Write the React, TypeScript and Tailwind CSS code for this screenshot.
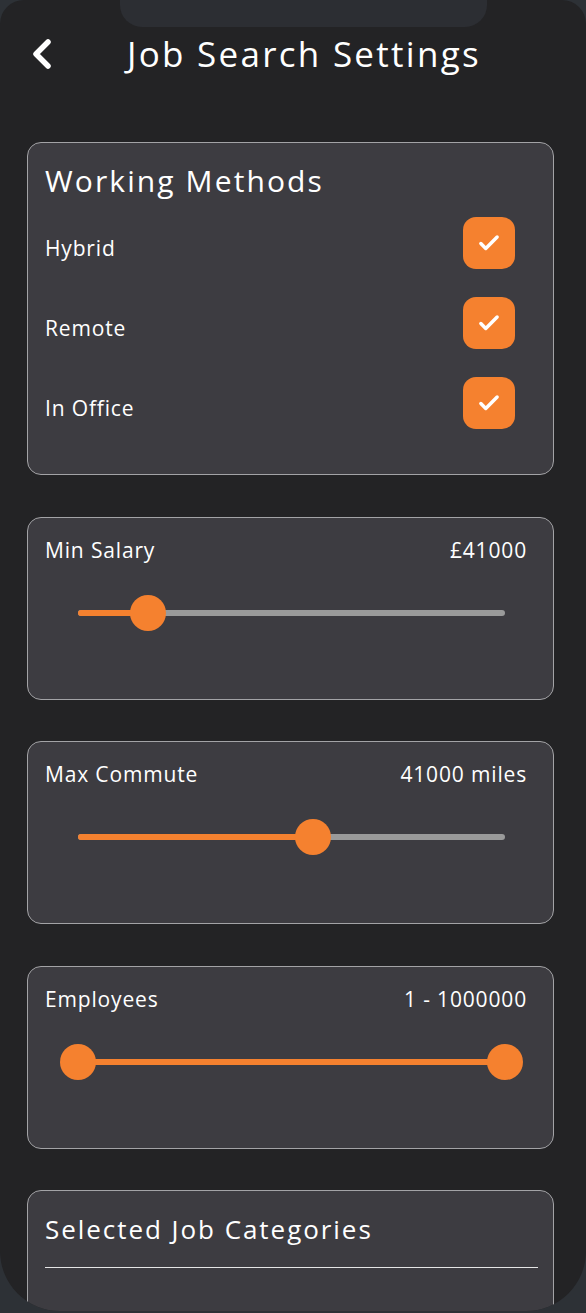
import React from "react";

const font = { fontFamily: '"Open Sans", "Liberation Sans", sans-serif' };

function Check() {
  return (
    <div className="flex h-[52px] w-[52px] items-center justify-center rounded-[13px] bg-[#f5812f]">
      <svg width="26" height="26" viewBox="0 0 24 24" fill="none">
        <path d="M4.5 12.5l4.5 4.5L19.5 6.5" stroke="white" strokeWidth="3.2" strokeLinecap="round" strokeLinejoin="round" />
      </svg>
    </div>
  );
}

function Slider({ from, to, range }: { from: number; to: number; range?: boolean }) {
  return (
    <div className="relative ml-[50px] mr-[48px] mt-[31px] h-[36px]">
      <div className="absolute left-0 right-0 top-1/2 h-[6px] -translate-y-1/2 rounded-full bg-[#9a9a9a]" />
      <div
        className="absolute top-1/2 h-[6px] -translate-y-1/2 rounded-full bg-[#f5812f]"
        style={{ left: `${from}%`, right: `${100 - to}%` }}
      />
      {range && (
        <div className="absolute top-0 h-[36px] w-[36px] rounded-full bg-[#f5812f]" style={{ left: `calc(${from}% - 18px)` }} />
      )}
      <div className="absolute top-0 h-[36px] w-[36px] rounded-full bg-[#f5812f]" style={{ left: `calc(${to}% - 18px)` }} />
    </div>
  );
}

function SliderCard({
  label,
  value,
  from,
  to,
  range,
}: {
  label: string;
  value: string;
  from: number;
  to: number;
  range?: boolean;
}) {
  return (
    <div className="rounded-[14px] border border-[#a3a3a6] bg-[#3d3c41] pb-[68px] pt-[18px]">
      <div className="flex items-center justify-between pl-[17px] pr-[26px] text-[21px] leading-[28px] tracking-[0.04em] text-white">
        <span>{label}</span>
        <span>{value}</span>
      </div>
      <Slider from={from} to={to} range={range} />
    </div>
  );
}

export default function App() {
  const methods = ["Hybrid", "Remote", "In Office"];
  return (
    <div className="min-h-screen bg-[#2d3136]" style={font}>
      <div className="relative h-[1311px] overflow-hidden rounded-b-[60px] rounded-t-[24px] bg-[#232325]">
        <div className="absolute left-[120px] top-0 h-[27px] w-[367px] rounded-b-[22px] bg-[#2c2e33]" />

        <header className="flex items-center pl-[30px] pt-[32px]">
          <svg width="24" height="34" viewBox="0 0 24 34" fill="none">
            <path d="M18 5L6 17l12 12" stroke="white" strokeWidth="5.5" strokeLinecap="round" strokeLinejoin="round" />
          </svg>
          <h1 className="ml-[73px] text-[35px] leading-[44px] tracking-[0.065em] text-white">Job Search Settings</h1>
        </header>

        <main className="mt-[66px] flex flex-col gap-[41.5px] pl-[27px] pr-[32px]">
          <div className="rounded-[14px] border border-[#a3a3a6] bg-[#3d3c41] px-[17px] pb-[45px] pt-[18px]">
            <h2 className="text-[30px] leading-[40px] tracking-[0.07em] text-white">Working Methods</h2>
            <div className="mt-[16px] flex flex-col gap-[28px]">
              {methods.map((m) => (
                <div key={m} className="flex h-[52px] items-center justify-between pr-[21px]">
                  <span className="mt-[11px] text-[21px] tracking-[0.04em] text-white">{m}</span>
                  <Check />
                </div>
              ))}
            </div>
          </div>

          <SliderCard label="Min Salary" value="£41000" from={0} to={16.4} />
          <SliderCard label="Max Commute" value="41000 miles" from={0} to={55} />
          <SliderCard label="Employees" value="1 - 1000000" from={0} to={100} range />

          <div className="h-[200px] rounded-[14px] border border-[#a3a3a6] bg-[#3d3c41] pl-[17px] pr-[15px] pt-[20px]">
            <h2 className="text-[26px] leading-[36px] tracking-[0.075em] text-white">Selected Job Categories</h2>
            <div className="mt-[20px] h-px bg-[#e5e5e5]" />
          </div>
        </main>
      </div>
    </div>
  );
}
